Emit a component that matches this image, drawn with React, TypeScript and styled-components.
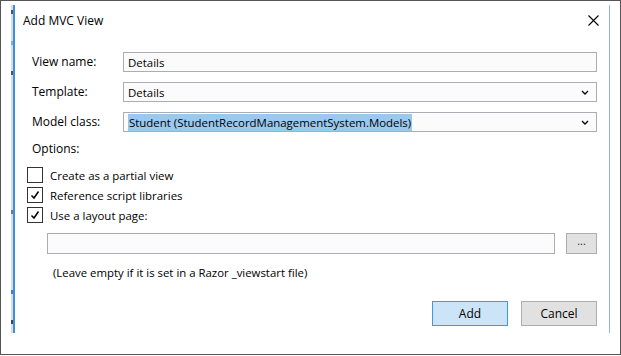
import React from "react";
import styled, { createGlobalStyle } from "styled-components";

const GlobalStyle = createGlobalStyle`
  html, body {
    margin: 0;
    padding: 0;
    background: #ffffff;
  }
  body {
    font-family: "Open Sans", "Noto Sans", "Liberation Sans", sans-serif;
    color: #000000;
  }
`;

const Frame = styled.div`
  position: relative;
  width: 621px;
  height: 355px;
  box-sizing: border-box;
  border: 1px solid #555555;
  display: flex;
  align-items: flex-start;
  padding: 4px 0 0 10px;
`;

const Strip = styled.div`
  position: relative;
  width: 2px;
  height: 328px;
  background: #dcdcdc;
`;

const Tick = styled.span<{ $top: number; $color: string }>`
  position: absolute;
  left: 0;
  top: ${(p) => p.$top}px;
  width: 2px;
  height: 4px;
  background: ${(p) => p.$color};
`;

const Dialog = styled.div`
  width: 597px;
  height: 328px;
  box-sizing: border-box;
  border-left: 2px solid #3d8fe0;
  border-right: 1px solid #86b8e6;
  background: #ffffff;
  display: flex;
  flex-direction: column;
`;

const Header = styled.div`
  height: 31px;
  display: flex;
  align-items: center;
  justify-content: space-between;
  padding: 0 10px 0 8px;
`;

const Title = styled.div`
  font-size: 12px;
`;

const CloseButton = styled.button`
  border: none;
  background: none;
  padding: 0;
  width: 11px;
  height: 11px;
  display: flex;
  cursor: pointer;
`;

const Body = styled.div`
  padding: 0 12px 0 17px;
  display: flex;
  flex-direction: column;
  flex: 1;
`;

const FormGrid = styled.div`
  margin-top: 16px;
  display: grid;
  grid-template-columns: 91px 1fr;
  row-gap: 10px;
  align-items: center;
`;

const Label = styled.div`
  font-size: 12px;
  line-height: 16px;
`;

const Field = styled.div<{ $height?: number }>`
  height: ${(p) => p.$height ?? 20}px;
  box-sizing: border-box;
  border: 1px solid #abadb3;
  background: #fbfbfb;
  display: flex;
  align-items: center;
  justify-content: space-between;
  padding: 0 7px 0 4px;
  font-size: 11.45px;
`;

const Selected = styled.span`
  background: #99c9ef;
  line-height: 17px;
  padding: 0 1px;
`;

const SectionLabel = styled(Label)`
  margin-top: 9px;
`;

const CheckList = styled.div`
  margin-top: 10px;
  margin-left: -5px;
  display: flex;
  flex-direction: column;
  gap: 4px;
`;

const CheckRow = styled.label`
  display: flex;
  align-items: center;
  gap: 7px;
  font-size: 11.45px;
  height: 16px;
`;

const Box = styled.span`
  width: 16px;
  height: 16px;
  box-sizing: border-box;
  border: 1px solid #333333;
  background: #ffffff;
  display: flex;
  align-items: center;
  justify-content: center;
`;

const LayoutRow = styled.div`
  margin-top: 10px;
  margin-left: 15px;
  display: flex;
  gap: 11px;
`;

const LayoutInput = styled(Field)`
  flex: 1;
`;

const SmallButton = styled.button`
  width: 31px;
  height: 21px;
  box-sizing: border-box;
  border: 1px solid #adadad;
  background: #e1e1e1;
  font-size: 11px;
  line-height: 10px;
  padding: 0 0 6px;
  font-family: inherit;
  color: #333;
`;

const Hint = styled.div`
  margin-top: 11px;
  margin-left: 21px;
  font-size: 11.4px;
  line-height: 16px;
`;

const Footer = styled.div`
  margin-top: 20px;
  display: flex;
  justify-content: flex-end;
  gap: 13px;
`;

const DialogButton = styled.button<{ $primary?: boolean }>`
  width: 76px;
  height: 25px;
  box-sizing: border-box;
  border: 1px solid ${(p) => (p.$primary ? "#3c9ae8" : "#adadad")};
  background: ${(p) => (p.$primary ? "#cce4f7" : "#e1e1e1")};
  font-family: inherit;
  font-size: 12px;
  color: #000;
  padding: 0;
`;

const Chevron = () => (
  <svg width="8" height="5" viewBox="0 0 8 5">
    <path d="M1 1 L4 4 L7 1" fill="none" stroke="#000" strokeWidth="1.3" />
  </svg>
);

const Check = () => (
  <svg width="12" height="12" viewBox="0 0 12 12">
    <path d="M2.5 6.5 L5 9 L9.5 2.5" fill="none" stroke="#000" strokeWidth="1.5" />
  </svg>
);

const options = [
  { label: "Create as a partial view", checked: false },
  { label: "Reference script libraries", checked: true },
  { label: "Use a layout page:", checked: true },
];

export default function App() {
  return (
    <>
      <GlobalStyle />
      <Frame>
        <Strip>
          <Tick $top={5} $color="#555" />
          <Tick $top={36} $color="#7ab0e0" />
          <Tick $top={66} $color="#555" />
          <Tick $top={205} $color="#777" />
          <Tick $top={285} $color="#3d7fd0" />
          <Tick $top={315} $color="#444" />
        </Strip>
        <Dialog>
          <Header>
            <Title>Add MVC View</Title>
            <CloseButton aria-label="Close">
              <svg width="11" height="11" viewBox="0 0 11 11">
                <path d="M0.5 0.5 L10.5 10.5 M10.5 0.5 L0.5 10.5" stroke="#000" strokeWidth="1.1" />
              </svg>
            </CloseButton>
          </Header>
          <Body>
            <FormGrid>
              <Label>View name:</Label>
              <Field>Details</Field>
              <Label>Template:</Label>
              <Field>
                Details
                <Chevron />
              </Field>
              <Label>Model class:</Label>
              <Field>
                <Selected>Student (StudentRecordManagementSystem.Models)</Selected>
                <Chevron />
              </Field>
            </FormGrid>
            <SectionLabel>Options:</SectionLabel>
            <CheckList>
              {options.map((o) => (
                <CheckRow key={o.label}>
                  <Box>{o.checked && <Check />}</Box>
                  {o.label}
                </CheckRow>
              ))}
            </CheckList>
            <LayoutRow>
              <LayoutInput $height={21} />
              <SmallButton>...</SmallButton>
            </LayoutRow>
            <Hint>(Leave empty if it is set in a Razor _viewstart file)</Hint>
            <Footer>
              <DialogButton $primary>Add</DialogButton>
              <DialogButton>Cancel</DialogButton>
            </Footer>
          </Body>
        </Dialog>
      </Frame>
    </>
  );
}
